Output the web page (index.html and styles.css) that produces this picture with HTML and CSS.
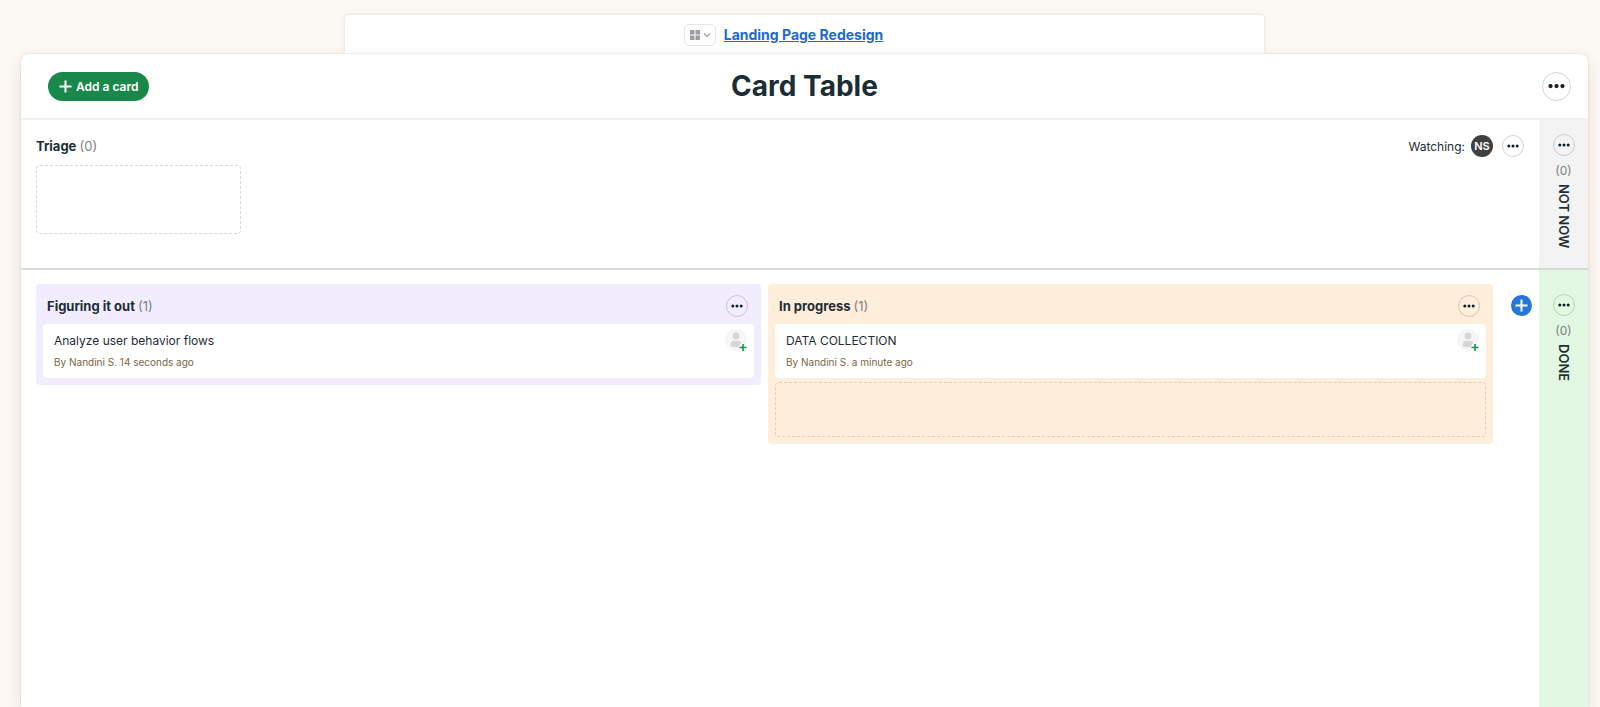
FILE: index.html
```
<!DOCTYPE html>
<html lang="en">
<head>
  <meta charset="UTF-8">
  <meta name="viewport" content="width=device-width, initial-scale=1">
  <title>Card Table</title>
  <link rel="stylesheet" href="styles.css">
</head>
<body>

<!-- Shared icons -->
<svg class="sprite" aria-hidden="true">
  <symbol id="dots" viewBox="0 0 12 4">
    <circle cx="1.8" cy="2" r="1.5"/><circle cx="6" cy="2" r="1.5"/><circle cx="10.2" cy="2" r="1.5"/>
  </symbol>
  <symbol id="plus" viewBox="0 0 13 13">
    <path d="M6.5 0.5v12M0.5 6.5h12" fill="none" stroke="currentColor" stroke-width="2"/>
  </symbol>
  <symbol id="person" viewBox="0 0 26 26">
    <circle cx="11" cy="11" r="11" fill="#f7f6f5"/>
    <circle cx="11" cy="7" r="3.4" fill="#d6d6d6"/>
    <path d="M5.6 17c0-3.500 1.800-5.800 3.500-5.600 1.200.9 2.600.9 3.800 0 1.600-.1 2.900 1.300 3.300 2.600l-2.600 3.800c-2.500.8-6.500.6-8-.8z" fill="#d6d6d6"/>
    <path d="M18 15v7M14.500 18.500h7" fill="none" stroke="#fff" stroke-width="4"/>
    <path d="M18 15v7M14.500 18.500h7" fill="none" stroke="#12934a" stroke-width="1.600"/>
  </symbol>
</svg>

<nav class="breadcrumb">
  <button class="project-menu" aria-label="Project tools">
    <svg width="22" height="12" viewBox="0 0 22 12">
      <path d="M1 1h4.500v4.500H1zM6.500 1H11v4.500H6.500zM1 6.500h4.500V11H1zM6.500 6.500H11V11H6.500z" fill="#989ea1"/>
      <path d="M15 4.500l3 3 3-3" fill="none" stroke="#9a9fa2" stroke-width="1.200"/>
    </svg>
  </button>
  <a href="#">Landing Page Redesign</a>
</nav>

<main class="panel">
  <header class="panel-header">
    <div>
      <button class="add-card"><svg><use href="#plus"/></svg>Add a card</button>
    </div>
    <h1>Card Table</h1>
    <div class="header-end">
      <button class="more more-large" aria-label="Card table menu"><svg><use href="#dots"/></svg></button>
    </div>
  </header>

  <!-- Triage and Not now -->
  <div class="board-row triage-row">
    <section class="triage">
      <div class="triage-header">
        <h2>Triage <span class="count">(0)</span></h2>
        <div class="watching">
          <span>Watching:</span>
          <span class="avatar">NS</span>
          <button class="more" aria-label="Triage menu"><svg><use href="#dots"/></svg></button>
        </div>
      </div>
      <div class="drop-zone triage-drop"></div>
    </section>
    <aside class="side not-now">
      <button class="more" aria-label="Not now menu"><svg><use href="#dots"/></svg></button>
      <span class="count">(0)</span>
      <h2 class="vertical">NOT NOW</h2>
    </aside>
  </div>

  <!-- Working columns and Done -->
  <div class="board-row work-row">
    <div class="columns">
      <section class="column purple">
        <div class="column-header">
          <h2>Figuring it out <span class="count">(1)</span></h2>
          <button class="more" aria-label="Figuring it out menu"><svg><use href="#dots"/></svg></button>
        </div>
        <article class="card">
          <div>
            <h3>Analyze user behavior flows</h3>
            <p>By Nandini S. 14 seconds ago</p>
          </div>
          <button class="assign" aria-label="Assign someone"><svg><use href="#person"/></svg></button>
        </article>
      </section>
      <section class="column orange">
        <div class="column-header">
          <h2>In progress <span class="count">(1)</span></h2>
          <button class="more" aria-label="In progress menu"><svg><use href="#dots"/></svg></button>
        </div>
        <article class="card">
          <div>
            <h3>DATA COLLECTION</h3>
            <p>By Nandini S. a minute ago</p>
          </div>
          <button class="assign" aria-label="Assign someone"><svg><use href="#person"/></svg></button>
        </article>
        <div class="drop-zone column-drop"></div>
      </section>
    </div>
    <div class="new-column">
      <button class="add-column" aria-label="Add a column"><svg><use href="#plus"/></svg></button>
    </div>
    <aside class="side done">
      <button class="more" aria-label="Done menu"><svg><use href="#dots"/></svg></button>
      <span class="count">(0)</span>
      <h2 class="vertical">DONE</h2>
    </aside>
  </div>
</main>

</body>
</html>
```
FILE: styles.css
```
* {
  box-sizing: border-box;
}

body {
  margin: 0;
  min-height: 100vh;
  padding: 15px 12px 0 21px;
  display: flex;
  flex-direction: column;
  background-color: #fcf8f3;
  color: #1d2d35;
  font-family: Inter, "Liberation Sans", sans-serif;
  font-size: 12px;
}

h1, h2, h3, p {
  margin: 0;
}

button {
  padding: 0;
  border: none;
  background: none;
  color: inherit;
  font: inherit;
  cursor: pointer;
}

.sprite {
  display: none;
}

/* Breadcrumb sheet behind the panel */
.breadcrumb {
  width: 100%;
  max-width: 919px;
  height: 39px;
  margin: 0 auto;
  padding-right: 42px;
  display: flex;
  align-items: center;
  justify-content: center;
  gap: 8px;
  background-color: #fff;
  border-radius: 4px 4px 0 0;
  box-shadow: 0 0 4px rgba(90, 60, 20, 0.15);
}

.breadcrumb a {
  color: #1b6ad0;
  font-size: 14px;
  font-weight: 700;
}

.project-menu {
  display: flex;
  align-items: center;
  justify-content: center;
  width: 32px;
  height: 22px;
  border: 1px solid #e6e6e6;
  border-radius: 5px;
}

/* Main panel */
.panel {
  position: relative;
  flex: 1;
  display: flex;
  flex-direction: column;
  background-color: #fff;
  border-radius: 8px 8px 0 0;
  box-shadow: 0 0 2px rgba(90, 60, 20, 0.2), 0 6px 16px rgba(90, 60, 20, 0.12);
}

.panel-header {
  display: grid;
  grid-template-columns: 1fr auto 1fr;
  align-items: center;
  height: 66px;
  padding: 0 17px 0 27px;
  border-bottom: 2px solid #f2efec;
}

.panel-header h1 {
  padding-right: 10px;
  font-size: 28px;
  font-weight: 700;
}

.header-end {
  display: flex;
  justify-content: flex-end;
}

.add-card {
  display: flex;
  align-items: center;
  gap: 4px;
  height: 29px;
  padding: 0 11px;
  border-radius: 15px;
  background-color: #1a874b;
  color: #fff;
  font-weight: 600;
}

.add-card svg {
  width: 13px;
  height: 13px;
}

.more {
  flex: none;
  display: flex;
  align-items: center;
  justify-content: center;
  width: 22px;
  height: 22px;
  border: 1px solid rgba(40, 40, 40, 0.2);
  border-radius: 50%;
}

.more svg {
  width: 12px;
  height: 4px;
  fill: #0f202b;
}

.more-large {
  width: 29px;
  height: 29px;
}

.more-large svg {
  width: 17px;
  height: 6px;
}

h2 {
  font-size: 13px;
  font-weight: 700;
  line-height: 20px;
}

.count {
  color: #7f8081;
  font-weight: 400;
}

.drop-zone {
  border: 1px dashed #d9d9d9;
  border-radius: 4px;
}

.board-row {
  display: flex;
}

/* Triage */
.triage-row {
  height: 150px;
  border-bottom: 2px solid #dadada;
}

.triage {
  flex: 1;
  padding: 14px 15px;
}

.triage-header {
  display: flex;
  align-items: center;
  justify-content: space-between;
  height: 24px;
  margin-bottom: 7px;
}

.watching {
  display: flex;
  align-items: center;
  gap: 6px;
}

.watching .more {
  margin-left: 3px;
}

.avatar {
  width: 22px;
  height: 22px;
  border-radius: 50%;
  background-color: #404040;
  color: #fff;
  font-size: 11px;
  font-weight: 600;
  line-height: 22px;
  text-align: center;
}

.triage-drop {
  width: 205px;
  height: 69px;
}

/* Collapsed columns at the right edge */
.side {
  flex: none;
  width: 49px;
  display: flex;
  flex-direction: column;
  align-items: center;
}

.side .count {
  margin: 7px 0 5px;
  line-height: 16px;
}

.not-now {
  padding-top: 14px;
  background-color: #f3f3f3;
}

.done {
  padding-top: 24px;
  background-color: #e2f8e1;
}

.vertical {
  writing-mode: vertical-rl;
  font-weight: 600;
}

/* Working columns */
.work-row {
  flex: 1;
}

.columns {
  flex: 1;
  display: flex;
  align-items: flex-start;
  gap: 7px;
  padding: 14px 0 14px 15px;
}

.column {
  flex: 1;
  padding: 4px 7px 7px;
  border-radius: 4px;
}

.purple {
  background-color: #f1edff;
}

.orange {
  background-color: #ffeedb;
}

.column-header {
  display: flex;
  align-items: center;
  justify-content: space-between;
  height: 36px;
  padding: 0 6px 0 4px;
}

.card {
  display: flex;
  align-items: flex-start;
  justify-content: space-between;
  height: 54px;
  padding: 5px 3px 0 11px;
  border-radius: 4px;
  background-color: #fff;
}

.card h3 {
  font-size: 12px;
  font-weight: 400;
  line-height: 24px;
}

.card p {
  color: #7b6545;
  font-size: 10px;
  line-height: 18px;
}

.assign svg {
  display: block;
  width: 26px;
  height: 26px;
}

.column-drop {
  height: 55px;
  margin-top: 4px;
  border-color: #e2cfb8;
}

.new-column {
  flex: none;
  width: 46px;
  padding: 25px 7px 0 0;
}

.add-column {
  display: flex;
  align-items: center;
  justify-content: center;
  width: 21px;
  height: 21px;
  margin-left: auto;
  border-radius: 50%;
  background-color: #2277d8;
  color: #fff;
}

.add-column svg {
  width: 13px;
  height: 13px;
}
```
